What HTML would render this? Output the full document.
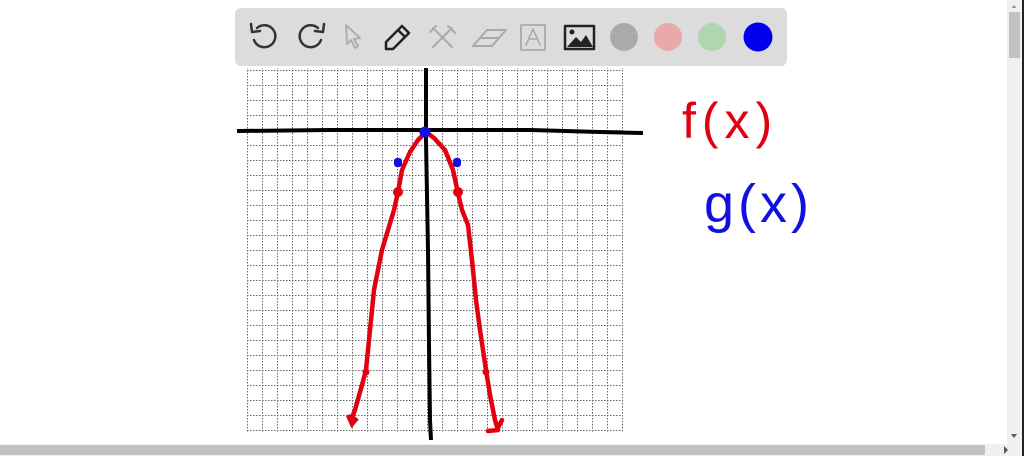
<!DOCTYPE html>
<html><head><meta charset="utf-8"><style>
html,body{margin:0;padding:0;width:1024px;height:456px;overflow:hidden;background:#fff;font-family:"Liberation Sans",sans-serif}
</style></head><body>
<svg width="1024" height="456" viewBox="0 0 1024 456" style="position:absolute;left:0;top:0">
<defs>
<pattern id="g" x="247" y="70" width="15" height="15" patternUnits="userSpaceOnUse">
<line x1="0.5" y1="0" x2="0.5" y2="15" stroke="#666" stroke-width="1" stroke-dasharray="1.5,1.5"/>
<line x1="0" y1="0.5" x2="15" y2="0.5" stroke="#666" stroke-width="1" stroke-dasharray="1.5,1.5"/>
</pattern>
</defs>
<rect x="247" y="68" width="376" height="364" fill="url(#g)"/>
<path d="M237 131 L330 130 L440 130 L530 130 L600 132 L643 133" stroke="#000" stroke-width="4" fill="none"/>
<path d="M426 68 L426 140 L428 250 L429 345 L430 420 L431 440" stroke="#000" stroke-width="4" fill="none"/>
<path d="M351 420 L355 410 L362 385 L366 370 L370 330 L374 290 L382 250 L388 230 L394 210 L398 192 L402 170 L410 152 L418 140 L426 132 L434 138 L445 150 L453 170 L458 193 L462 210 L468 225 L472 260 L476 300 L480 330 L486 370 L490 395 L495 420 L498 430 L488 431" stroke="#e00010" stroke-width="4.5" fill="none" stroke-linejoin="round" stroke-linecap="round"/>
<path d="M348 415 L352 424 L357 418" stroke="#e00010" stroke-width="4.5" fill="none"/>
<path d="M502 420 L497 430" stroke="#e00010" stroke-width="4.5" fill="none" stroke-linecap="round"/>
<circle cx="398" cy="192" r="5" fill="#e00010"/>
<circle cx="458" cy="192" r="5" fill="#e00010"/>
<circle cx="366" cy="372" r="3.5" fill="#e00010"/>
<circle cx="486" cy="372" r="3.5" fill="#e00010"/>
<circle cx="425" cy="132" r="5.5" fill="#1010e0"/>
<rect x="394" y="158" width="8" height="9" rx="3" fill="#1010e0"/>
<rect x="453" y="158" width="8" height="9" rx="3" fill="#1010e0"/>
<text x="682" y="138" font-family="Liberation Sans, sans-serif" font-size="50" fill="#e00010" letter-spacing="6">f(x)</text>
<text x="704" y="222" font-family="Liberation Sans, sans-serif" font-size="54" fill="#1010e0" letter-spacing="4">g(x)</text>
<rect x="235" y="8" width="552" height="58" rx="6" fill="#dcdcdc"/>
<g fill="none" stroke-linecap="round" stroke-linejoin="round">
<path d="M257 28 A11 11 0 1 1 254 40" stroke="#333" stroke-width="2.5"/>
<path d="M251 24 L252 32 L260 31" stroke="#333" stroke-width="2.5"/>
<path d="M318 28 A11 11 0 1 0 321 40" stroke="#333" stroke-width="2.5"/>
<path d="M324 24 L323 32 L315 31" stroke="#333" stroke-width="2.5"/>
<path d="M346 25 L347 44 L351 40 L355 48 L358 46 L354 39 L360 38 Z" stroke="#aaa" stroke-width="1.8"/>
<path d="M386 42 L402 26 L409 33 L393 49 L386 49 Z M398 30 L405 37" stroke="#222" stroke-width="2.5"/>
<path d="M433 28 L452 47 M452 28 L433 47 M430 32 L436 26 M448 26 L455 33" stroke="#aaa" stroke-width="2"/>
<path d="M473 46 L487 30 L506 30 L492 46 Z M480 38 L499 38" stroke="#aaa" stroke-width="2"/>
<rect x="521" y="25" width="24" height="25" stroke="#aaa" stroke-width="1.8"/>
<path d="M526 45 L533 29 L540 45 M529 39 L537 39" stroke="#aaa" stroke-width="1.6"/>
<rect x="565" y="26" width="29" height="23" stroke="#222" stroke-width="2.5"/>
</g>
<path d="M567 47 L576 37 L581 42 L586 35 L593 47 Z" fill="#222"/>
<circle cx="572" cy="32" r="2.5" fill="#222"/>
<circle cx="624" cy="37" r="14" fill="#aaa"/>
<circle cx="668" cy="37" r="14" fill="#e8a9ab"/>
<circle cx="712" cy="37" r="14" fill="#b0d6b0"/>
<circle cx="758" cy="37" r="14.5" fill="#0000ee"/>
<rect x="1007" y="0" width="15" height="444" fill="#f0f0f0"/>
<rect x="1009" y="12" width="11" height="46" fill="#c2c2c2"/>
<rect x="0" y="444" width="1022" height="12" fill="#f0f0f0"/>
<rect x="0" y="445" width="985" height="10" fill="#c2c2c2"/>
<rect x="1022" y="0" width="2" height="456" fill="#222"/>
<path d="M1004 446 L1008 450 L1004 454Z" fill="#555"/>
<path d="M1011 434 L1017 434 L1014 438Z" fill="#555"/>
<path d="M1012 8 L1016 8 L1014 5Z" fill="#888"/>
</svg>
</body></html>
